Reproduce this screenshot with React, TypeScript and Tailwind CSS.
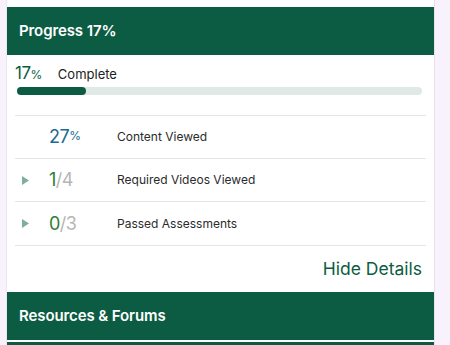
import React from "react";

const Tri = () => (
  <svg width="7" height="9" viewBox="0 0 7 9" className="block">
    <polygon points="0,0 7,4.5 0,9" fill="#7fae9c" />
  </svg>
);

export default function App() {
  const font = { fontFamily: "Inter, 'Open Sans', sans-serif" };
  const rows = [
    { tri: false, a: "27", b: "%", sup: true, color: "#1b6a93", label: "Content Viewed", h: "h-[43px]" },
    { tri: true, a: "1", b: "/4", sup: false, color: "#2e7d32", label: "Required Videos Viewed", h: "h-[43px]" },
    { tri: true, a: "0", b: "/3", sup: false, color: "#2e7d32", label: "Passed Assessments", h: "h-[44px]" },
  ];
  return (
    <div className="flex w-[450px] h-[345px] bg-[#f8f2fd] overflow-hidden" style={font}>
      <div className="w-[7px] shrink-0 border-r border-[#ece6f2]" />
      <div className="w-[428px] shrink-0 bg-white border-r border-[#e6e1ea]">
        <div className="h-[7px]" />
        <div className="h-[48px] bg-[#0b5c42] flex items-center pl-[12px] text-white text-[15px] font-semibold tracking-[-0.1px]">
          Progress 17%
        </div>
        <div className="px-[10px]">
          <div className="flex items-baseline h-[32px] pt-[6px]">
            <span className="text-[#0b5c42] text-[17px] ml-[-2px] tracking-[-0.5px]">17<span className="text-[12px]">%</span></span>
            <span className="ml-[16px] text-[13px] text-[#222]">Complete</span>
          </div>
          <div className="h-[8px] rounded-full bg-[#e1e9e6] w-[405px]">
            <div className="h-[8px] rounded-full bg-[#0b5c42] w-[69px]" />
          </div>
          <div className="h-[21px] border-b border-[#e5e5e5] -mx-[2px]" />
          {rows.map((r, i) => (
            <div key={i} className={`flex items-center ${r.h} border-b border-[#e5e5e5] -mx-[2px] pl-[7px]`}>
              <div className="w-[27px] shrink-0">{r.tri && <Tri />}</div>
              <div className="w-[68px] shrink-0 text-[18px] leading-none tracking-[-0.5px]">
                <span style={{ color: r.color }}>{r.a}</span>
                {r.sup ? (
                  <sup className="text-[12px] relative top-[-3px]" style={{ color: r.color }}>{r.b}</sup>
                ) : (
                  <span className="text-[#b5b5b5]">{r.b}</span>
                )}
              </div>
              <div className="text-[12px] text-[#2b2b2b]">{r.label}</div>
            </div>
          ))}
          <div className="h-[46px] flex items-center justify-end pr-[2px] text-[17.5px] text-[#0b5c42]">
            Hide Details
          </div>
        </div>
        <div className="h-[48px] bg-[#0b5c42] flex items-center pl-[12px] text-white text-[15px] font-semibold tracking-[-0.1px]">
          Resources &amp; Forums
        </div>
        <div className="h-[2px] bg-white" />
        <div className="h-[20px] bg-[#0b5c42]" />
      </div>
      <div className="flex-1" />
    </div>
  );
}
